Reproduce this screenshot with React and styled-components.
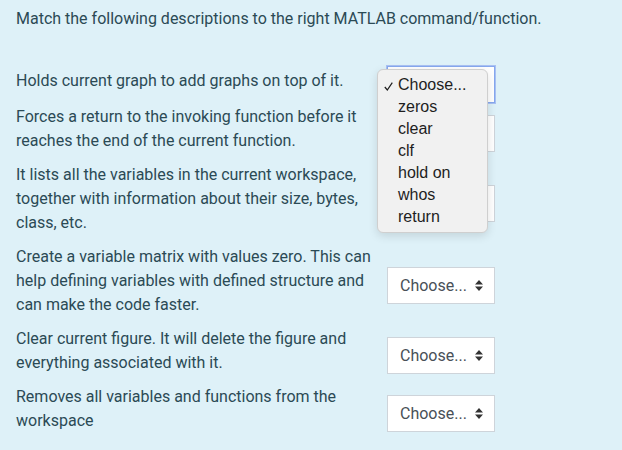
import React from 'react';
import styled, { createGlobalStyle } from 'styled-components';

const GlobalStyle = createGlobalStyle`
  html, body {
    margin: 0;
    padding: 0;
    background: #def1f8;
  }
  body {
    font-family: Roboto, "Liberation Sans", sans-serif;
    color: #2b4a55;
  }
`;

const Page = styled.div`
  width: 622px;
  height: 450px;
  padding: 7px 16px 0;
  box-sizing: border-box;
  background: #def1f8;
  overflow: hidden;
`;

const Title = styled.p`
  margin: 0 0 27px;
  font-size: 16px;
  line-height: 24px;
`;

const Row = styled.div`
  display: flex;
  align-items: center;
  margin-bottom: ${(p) => (p.$tight ? '2px' : '10px')};
`;

const Text = styled.p`
  margin: 0;
  width: 371px;
  flex: none;
  font-size: 16px;
  line-height: 24px;
`;

const SelectWrap = styled.div`
  position: relative;
  margin: 8px 0 0 0;
`;

const SelectBox = styled.div`
  width: 108px;
  height: 37px;
  box-sizing: border-box;
  display: flex;
  align-items: center;
  padding: 0 0 0 12px;
  background: #fff;
  border: 1px solid ${(p) => (p.$focused ? '#86a8ee' : '#ced4da')};
  box-shadow: ${(p) => (p.$focused ? '0 0 0 1px #a9c1f3' : 'none')};
  color: #495057;
  font-size: 16px;
`;

const Arrows = styled.svg`
  margin-left: 8px;
`;

const Menu = styled.ul`
  position: absolute;
  left: -10px;
  top: 3px;
  width: 111px;
  margin: 0;
  padding: 4px 0;
  list-style: none;
  box-sizing: border-box;
  background: #f1f1f1;
  border: 1px solid #cfcfcf;
  border-radius: 6px;
  box-shadow: 0 3px 10px rgba(0, 0, 0, 0.12);
  font-family: "Liberation Sans", Arial, sans-serif;
  font-size: 16px;
  color: #1e1e1e;
  z-index: 2;
`;

const MenuItem = styled.li`
  position: relative;
  height: 22px;
  line-height: 22px;
  padding-left: 20px;
`;

const Check = styled.svg`
  position: absolute;
  left: 6px;
  top: 8px;
`;

const rows = [
  { lines: ['Holds current graph to add graphs on top of it.'] },
  { lines: ['Forces a return to the invoking function before it', 'reaches the end of the current function.'] },
  { lines: ['It lists all the variables in the current workspace,', 'together with information about their size, bytes,', 'class, etc.'] },
  { lines: ['Create a variable matrix with values zero. This can', 'help defining variables with defined structure and', 'can make the code faster.'] },
  { lines: ['Clear current figure. It will delete the figure and', 'everything associated with it.'] },
  { lines: ['Removes all variables and functions from the', 'workspace'] },
];

const options = ['Choose...', 'zeros', 'clear', 'clf', 'hold on', 'whos', 'return'];

const Select = ({ open }) => (
  <SelectWrap>
    <SelectBox $focused={open}>
      Choose...
      <Arrows width="8" height="11" viewBox="0 0 8 11">
        <path d="M4 0 L8 4.5 H0 Z M4 11 L8 6.5 H0 Z" fill="#333" />
      </Arrows>
    </SelectBox>
    {open && (
      <Menu>
        {options.map((o, i) => (
          <MenuItem key={o}>
            {i === 0 && (
              <Check width="9" height="9" viewBox="0 0 9 9">
                <path d="M0.8 5 L3.3 8 L8.3 0.6" fill="none" stroke="#1e1e1e" strokeWidth="1.2" />
              </Check>
            )}
            {o}
          </MenuItem>
        ))}
      </Menu>
    )}
  </SelectWrap>
);

const App = () => (
  <Page>
    <GlobalStyle />
    <Title>Match the following descriptions to the right MATLAB command/function.</Title>
    {rows.map((r, i) => (
      <Row key={i} $tight={i === 0}>
        <Text>
          {r.lines.map((l, j) => (
            <React.Fragment key={j}>
              {l}
              {j < r.lines.length - 1 && <br />}
            </React.Fragment>
          ))}
        </Text>
        <Select open={i === 0} />
      </Row>
    ))}
  </Page>
);

export default App;
